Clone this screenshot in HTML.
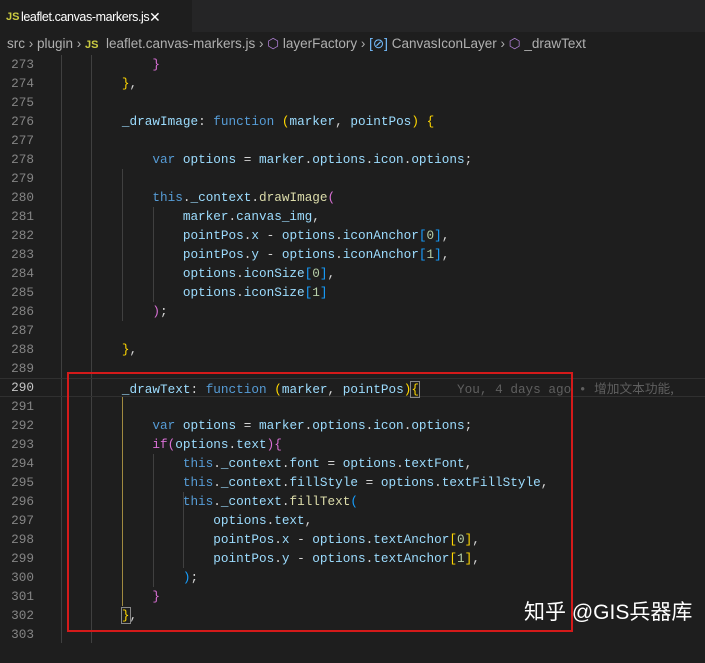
<!DOCTYPE html>
<html><head><meta charset="utf-8"><style>
body{margin:0;width:705px;height:643px;background:#1e1e1e;overflow:hidden;position:relative;font-family:"Liberation Sans",sans-serif}
.tabs{position:absolute;left:0;top:0;width:705px;height:32px;background:#252526}
.tab{position:absolute;left:0;top:0;height:32px;width:192px;background:#1e1e1e;color:#fff;font-size:12px;line-height:32px;white-space:nowrap}
.js{color:#cbcb41;font-weight:bold;font-size:11px}
.bc{position:absolute;left:0;top:32px;height:23px;line-height:23px;color:#b0b0b0;font-size:13.5px;padding-left:7px;white-space:nowrap}
.code{position:absolute;left:0;top:55px;font-family:"Liberation Mono",monospace;font-size:12.7px;line-height:19px;white-space:pre}
.ln{position:absolute;left:0;width:34px;text-align:right;color:#858585}
.tx{position:absolute;left:61px;color:#d4d4d4}
.k{color:#569cd6}.p{color:#9cdcfe}.f{color:#dcdcaa}.y{color:#ffd700}.m{color:#da70d6}.b{color:#179fff}.n{color:#b5cea8}.g{color:#5a5a5a}
.guide{position:absolute;width:1px;background:#404040}
</style></head><body>
<div class="tabs"><div class="tab"><span class="js" style="position:absolute;left:6px;top:1px">JS</span><span style="position:absolute;left:21px;top:1px;font-size:12.5px;letter-spacing:-0.4px">leaflet.canvas-markers.js</span><span style="position:absolute;left:149px;top:1px;font-size:14px">✕</span></div></div>
<div class="bc">src › plugin › <span class="js">JS</span>&nbsp; leaflet.canvas-markers.js › <span style="color:#b180d7">⬡</span> layerFactory › <span style="color:#75beff">[⊘]</span> CanvasIconLayer › <span style="color:#b180d7">⬡</span> _drawText</div>
<div class="guide" style="left:61px;top:55px;height:588px"></div>
<div class="guide" style="left:91px;top:55px;height:588px"></div>
<div class="guide" style="left:122px;top:169px;height:152px"></div>
<div class="guide" style="left:153px;top:207px;height:95px"></div>
<div class="guide" style="left:122px;top:397px;height:209px;background:#a08a40"></div>
<div class="guide" style="left:153px;top:454px;height:133px"></div>
<div class="guide" style="left:183px;top:492px;height:76px"></div>
<div style="position:absolute;left:0;top:378px;width:705px;height:19px;border-top:1px solid #303030;border-bottom:1px solid #303030;box-sizing:border-box"></div>
<div class="code">
<div class="ln" style="top:0">273</div><div class="tx" style="top:0">            <span class="m">}</span></div>
<div class="ln" style="top:19px">274</div><div class="tx" style="top:19px">        <span class="y">}</span>,</div>
<div class="ln" style="top:38px">275</div>
<div class="ln" style="top:57px">276</div><div class="tx" style="top:57px">        <span class="p">_drawImage</span>: <span class="k">function</span> <span class="y">(</span><span class="p">marker</span>, <span class="p">pointPos</span><span class="y">)</span> <span class="y">{</span></div>
<div class="ln" style="top:76px">277</div>
<div class="ln" style="top:95px">278</div><div class="tx" style="top:95px">            <span class="k">var</span> <span class="p">options</span> = <span class="p">marker</span>.<span class="p">options</span>.<span class="p">icon</span>.<span class="p">options</span>;</div>
<div class="ln" style="top:114px">279</div>
<div class="ln" style="top:133px">280</div><div class="tx" style="top:133px">            <span class="k">this</span>.<span class="p">_context</span>.<span class="f">drawImage</span><span class="m">(</span></div>
<div class="ln" style="top:152px">281</div><div class="tx" style="top:152px">                <span class="p">marker</span>.<span class="p">canvas_img</span>,</div>
<div class="ln" style="top:171px">282</div><div class="tx" style="top:171px">                <span class="p">pointPos</span>.<span class="p">x</span> - <span class="p">options</span>.<span class="p">iconAnchor</span><span class="b">[</span><span class="n">0</span><span class="b">]</span>,</div>
<div class="ln" style="top:190px">283</div><div class="tx" style="top:190px">                <span class="p">pointPos</span>.<span class="p">y</span> - <span class="p">options</span>.<span class="p">iconAnchor</span><span class="b">[</span><span class="n">1</span><span class="b">]</span>,</div>
<div class="ln" style="top:209px">284</div><div class="tx" style="top:209px">                <span class="p">options</span>.<span class="p">iconSize</span><span class="b">[</span><span class="n">0</span><span class="b">]</span>,</div>
<div class="ln" style="top:228px">285</div><div class="tx" style="top:228px">                <span class="p">options</span>.<span class="p">iconSize</span><span class="b">[</span><span class="n">1</span><span class="b">]</span></div>
<div class="ln" style="top:247px">286</div><div class="tx" style="top:247px">            <span class="m">)</span>;</div>
<div class="ln" style="top:266px">287</div>
<div class="ln" style="top:285px">288</div><div class="tx" style="top:285px">        <span class="y">}</span>,</div>
<div class="ln" style="top:304px">289</div>
<div class="ln" style="top:323px;color:#c6c6c6">290</div><div class="tx" style="top:323px">        <span class="p">_drawText</span>: <span class="k">function</span> <span class="y">(</span><span class="p">marker</span>, <span class="p">pointPos</span><span class="y">)</span><span class="y" style="outline:1px solid #888">{</span>     <span style="color:#5f5f5f">You, 4 days ago • <span style="font-family:'Noto Sans CJK SC',sans-serif">增加文本功能,</span></span></div>
<div class="ln" style="top:342px">291</div>
<div class="ln" style="top:361px">292</div><div class="tx" style="top:361px">            <span class="k">var</span> <span class="p">options</span> = <span class="p">marker</span>.<span class="p">options</span>.<span class="p">icon</span>.<span class="p">options</span>;</div>
<div class="ln" style="top:380px">293</div><div class="tx" style="top:380px">            <span class="m">if</span><span class="m">(</span><span class="p">options</span>.<span class="p">text</span><span class="m">){</span></div>
<div class="ln" style="top:399px">294</div><div class="tx" style="top:399px">                <span class="k">this</span>.<span class="p">_context</span>.<span class="p">font</span> = <span class="p">options</span>.<span class="p">textFont</span>,</div>
<div class="ln" style="top:418px">295</div><div class="tx" style="top:418px">                <span class="k">this</span>.<span class="p">_context</span>.<span class="p">fillStyle</span> = <span class="p">options</span>.<span class="p">textFillStyle</span>,</div>
<div class="ln" style="top:437px">296</div><div class="tx" style="top:437px">                <span class="k">this</span>.<span class="p">_context</span>.<span class="f">fillText</span><span class="b">(</span></div>
<div class="ln" style="top:456px">297</div><div class="tx" style="top:456px">                    <span class="p">options</span>.<span class="p">text</span>,</div>
<div class="ln" style="top:475px">298</div><div class="tx" style="top:475px">                    <span class="p">pointPos</span>.<span class="p">x</span> - <span class="p">options</span>.<span class="p">textAnchor</span><span class="y">[</span><span class="n">0</span><span class="y">]</span>,</div>
<div class="ln" style="top:494px">299</div><div class="tx" style="top:494px">                    <span class="p">pointPos</span>.<span class="p">y</span> - <span class="p">options</span>.<span class="p">textAnchor</span><span class="y">[</span><span class="n">1</span><span class="y">]</span>,</div>
<div class="ln" style="top:513px">300</div><div class="tx" style="top:513px">                <span class="b">)</span>;</div>
<div class="ln" style="top:532px">301</div><div class="tx" style="top:532px">            <span class="m">}</span></div>
<div class="ln" style="top:551px">302</div><div class="tx" style="top:551px">        <span class="y" style="outline:1px solid #888">}</span>,</div>
<div class="ln" style="top:570px">303</div>
</div>
<div style="position:absolute;left:67px;top:372px;width:502px;height:256px;border:2px solid #d41a1a"></div>
<div style="position:absolute;left:524px;top:596px;color:#fff;font-size:21px;font-family:'Liberation Sans','Noto Sans CJK SC',sans-serif;white-space:nowrap">知乎 @GIS兵器库</div>
</body></html>
